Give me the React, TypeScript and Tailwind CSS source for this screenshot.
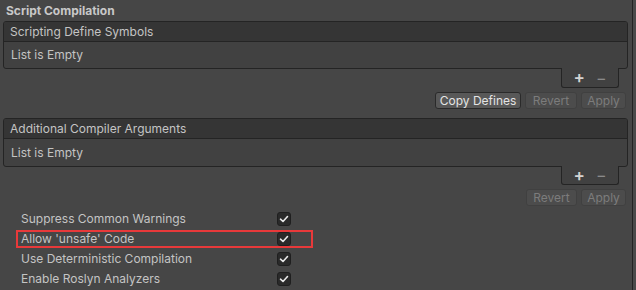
import React from 'react'

const font = { fontFamily: 'Inter, "Noto Sans", sans-serif' }

function ListBox({ title, h, tabH }: { title: string; h: string; tabH: string }) {
  return (
    <div className="flex flex-col">
      <div className={`${h} rounded-[3px] border border-[#242424] bg-[#414141] overflow-hidden flex flex-col`}>
        <div className="h-[20px] shrink-0 bg-[#353535] border-b border-[#242424] flex items-center pl-[6px] text-[12px] text-[#c4c4c4]">
          {title}
        </div>
        <div className="flex-1 flex items-center pl-[7px] text-[12px] text-[#c4c4c4]">List is Empty</div>
      </div>
      <div className={`${tabH} self-end mr-[9px] -mt-px w-[58px] rounded-b-[3px] border border-t-0 border-[#242424] bg-[#414141] flex items-center justify-center gap-[11px] text-[#d4d4d4]`}>
        <span className="text-[17px] leading-none font-semibold">+</span>
        <span className="text-[16px] leading-none text-[#8a8a8a]">−</span>
      </div>
    </div>
  )
}

function Btn({ label, disabled, w }: { label: string; disabled?: boolean; w: string }) {
  return (
    <div
      className={`${w} h-[17px] rounded-[3px] border flex items-center justify-center text-[12px] ${
        disabled ? 'bg-[#4c4c4c] border-[#404040] text-[#7c7c7c]' : 'bg-[#585858] border-[#2a2a2a] text-[#e4e4e4]'
      }`}
    >
      {label}
    </div>
  )
}

function Check() {
  return (
    <div className="w-[14px] h-[14px] rounded-[3px] bg-[#2a2a2a] border border-[#1f1f1f] flex items-center justify-center">
      <svg width="10" height="10" viewBox="0 0 10 10">
        <path d="M1.5 5.2 L4 7.5 L8.5 2.5" fill="none" stroke="#e8e8e8" strokeWidth="1.6" strokeLinecap="round" strokeLinejoin="round" />
      </svg>
    </div>
  )
}

const toggles = ['Suppress Common Warnings', "Allow 'unsafe' Code", 'Use Deterministic Compilation', 'Enable Roslyn Analyzers']

export default function App() {
  return (
    <div className="w-[636px] h-[290px] bg-[#464646] flex overflow-hidden" style={font}>
      <div className="w-[632px] pl-[3px] pr-[4px] flex flex-col">
        <div className="h-[21px] shrink-0 flex items-center pl-[3px] text-[12px] font-bold text-[#c8c8c8]">Script Compilation</div>

        <ListBox title="Scripting Define Symbols" h="h-[48px]" tabH="h-[20px]" />
        <div className="flex justify-end gap-[4px] mt-[4px] mr-[2px]">
          <Btn label="Copy Defines" w="w-[86px]" />
          <Btn label="Revert" disabled w="w-[52px]" />
          <Btn label="Apply" disabled w="w-[45px]" />
        </div>

        <div className="mt-[9px]">
          <ListBox title="Additional Compiler Arguments" h="h-[49px]" tabH="h-[19px]" />
        </div>
        <div className="flex justify-end gap-[4px] mt-[4px] mr-[2px]">
          <Btn label="Revert" disabled w="w-[51px]" />
          <Btn label="Apply" disabled w="w-[45px]" />
        </div>

        <div className="relative mt-[3px] flex flex-col">
          {toggles.map((t) => (
            <div key={t} className="h-[20px] flex items-center pl-[18px] text-[12px] text-[#c4c4c4]">
              <span className="w-[256px]">{t}</span>
              <Check />
            </div>
          ))}
          <div className="absolute left-[13px] top-[21px] w-[297px] h-[18px] border-2 border-[#e8393a]" />
        </div>
      </div>
      <div className="flex-1 border-l border-[#232323] bg-[#4a4a4a]" />
    </div>
  )
}
